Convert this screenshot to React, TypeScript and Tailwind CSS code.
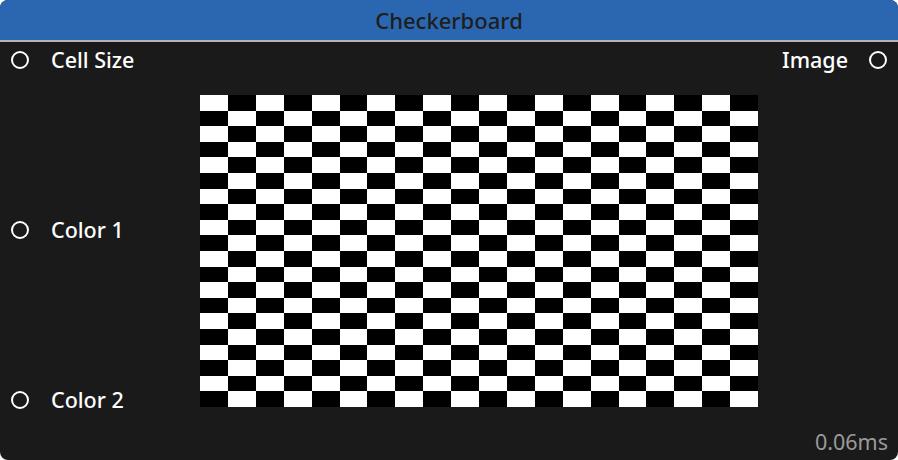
const SIZE = 20;

function Port({ label, side = "left" }: { label: string; side?: "left" | "right" }) {
  const dot = <span className="w-[18px] h-[18px] rounded-full border-2 border-white shrink-0" />;
  return (
    <div className="flex items-center h-6">
      {side === "left" && dot}
      <span className={`text-[21.5px] font-medium text-white leading-6 ${side === "left" ? "ml-[22px]" : "mr-[21px]"}`}>
        {label}
      </span>
      {side === "right" && dot}
    </div>
  );
}

function Checkerboard() {
  const cells = [];
  for (let r = 0; r < SIZE; r++) {
    for (let c = 0; c < SIZE; c++) {
      if ((r + c) % 2 === 1) cells.push(<rect key={`${r}-${c}`} x={c} y={r} width={1} height={1} fill="#000" />);
    }
  }
  return (
    <svg width={558} height={312} viewBox={`0 0 ${SIZE} ${SIZE}`} preserveAspectRatio="none" shapeRendering="crispEdges" className="block">
      <rect x={0} y={0} width={SIZE} height={SIZE} fill="#fff" />
      {cells}
    </svg>
  );
}

export default function App() {
  return (
    <div className="w-[898px] h-[460px] rounded-lg overflow-hidden bg-[#1a1a1a] flex flex-col" style={{ fontFamily: '"Noto Sans", "Open Sans", sans-serif' }}>
      <div className="h-[42px] shrink-0 bg-[#2b67b0] border-b-2 border-[#b4b4b4] text-center text-[22px] font-medium leading-10 text-[#1e1e1e]">
        Checkerboard
      </div>
      <div className="flex-1 flex">
        <div className="w-[200px] flex flex-col justify-between pt-[6px] pb-[48px] pl-[11px]">
          <Port label="Cell Size" />
          <Port label="Color 1" />
          <Port label="Color 2" />
        </div>
        <div className="pt-[53px]">
          <Checkerboard />
        </div>
        <div className="flex-1 flex flex-col justify-between items-end pt-[6px] pr-[11px] pb-[6px]">
          <Port label="Image" side="right" />
          <span className="text-[21.5px] text-[#9a9a9a] leading-6 mr-[-1px]">0.06ms</span>
        </div>
      </div>
    </div>
  );
}
